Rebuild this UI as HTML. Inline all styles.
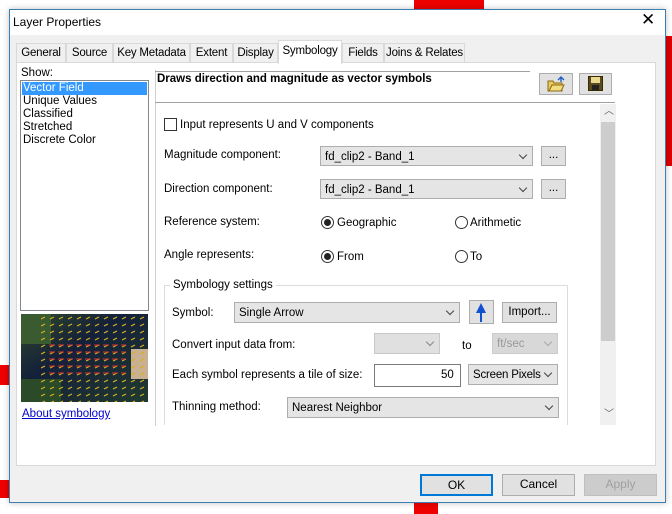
<!DOCTYPE html>
<html><head><meta charset="utf-8"><style>
*{margin:0;padding:0;box-sizing:border-box}
body{width:672px;height:514px;overflow:hidden;background:#fff;font-family:"Liberation Sans",sans-serif;font-size:11.5px;color:#000;position:relative}
.a{position:absolute}
.t{position:absolute;line-height:14px;white-space:nowrap}
.cb{position:absolute;background:#e5e5e5;border:1px solid #adadad}
.cb span{position:absolute;left:4px;top:3px;line-height:14px;white-space:nowrap}
.chev{position:absolute;right:6px;top:5px;width:6px;height:6px;border-right:1px solid #444;border-bottom:1px solid #444;transform:rotate(45deg);}
.btn{position:absolute;background:#e1e1e1;border:1px solid #adadad;text-align:center;line-height:19px;white-space:nowrap}
.tab{position:absolute;top:43px;height:20px;border:1px solid #d9d9d9;border-bottom:none;background:#f0f0f0;text-align:center;line-height:19px;font-size:11.5px;white-space:nowrap;letter-spacing:-0.2px}
.radio{position:absolute;width:13px;height:13px;border:1px solid #333;border-radius:50%;background:#fff}
.radio.on::after{content:"";position:absolute;left:2px;top:2px;width:7px;height:7px;border-radius:50%;background:#222}
</style></head><body>
<div class="a" style="left:414px;top:0;width:70px;height:10px;background:#e00"></div>
<div class="a" style="left:665px;top:36px;width:7px;height:130px;background:#d00"></div>
<div class="a" style="left:0;top:365px;width:9px;height:20px;background:#e00"></div>
<div class="a" style="left:0;top:480px;width:9px;height:18px;background:#e00"></div>
<div class="a" style="left:414px;top:502px;width:24px;height:12px;background:#e00"></div>
<!-- dialog -->
<div class="a" style="left:9px;top:9px;width:657px;height:494px;background:#f0f0f0;border:1px solid #3c7fb1;box-shadow:0 0 6px rgba(0,0,0,.25)"></div>
<div class="a" style="left:10px;top:10px;width:655px;height:25px;background:#fff"></div>
<div class="t" style="left:13px;top:15px;font-size:12px">Layer Properties</div>
<div class="t" style="left:641px;top:13px;font-size:17px;font-weight:300">✕</div>
<!-- tabs -->
<div class="tab" style="left:16px;width:50px">General</div>
<div class="tab" style="left:66px;width:47px">Source</div>
<div class="tab" style="left:113px;width:77px">Key Metadata</div>
<div class="tab" style="left:190px;width:43px">Extent</div>
<div class="tab" style="left:233px;width:45px">Display</div>
<div class="tab" style="left:342px;width:42px">Fields</div>
<div class="tab" style="left:384px;width:81px">Joins &amp; Relates</div>
<div class="a" style="left:16px;top:62px;width:640px;height:404px;background:#fff;border:1px solid #d9d9d9"></div>
<div class="tab" style="left:278px;top:40px;width:64px;height:24px;background:#fff;line-height:21px">Symbology</div>
<!-- left -->
<div class="t" style="left:21px;top:66px">Show:</div>
<div class="a" style="left:20px;top:80px;width:129px;height:231px;border:1px solid #828790"></div>
<div class="a" style="left:22px;top:82px;width:125px;height:13px;background:#3399ff"></div>
<div class="t" style="left:23px;top:82px;line-height:13px;color:#fff">Vector Field</div>
<div class="t" style="left:23px;top:95px;line-height:13px">Unique Values</div>
<div class="t" style="left:23px;top:108px;line-height:13px">Classified</div>
<div class="t" style="left:23px;top:121px;line-height:13px">Stretched</div>
<div class="t" style="left:23px;top:134px;line-height:13px">Discrete Color</div>
<svg class="a" style="left:21px;top:314px" width="127" height="88">
<defs><linearGradient id="g" x1="0" y1="0" x2="1" y2="1"><stop offset="0" stop-color="#2f4a2a"/><stop offset=".4" stop-color="#14203a"/><stop offset="1" stop-color="#203a30"/></linearGradient>
<pattern id="p" width="9" height="7" patternUnits="userSpaceOnUse"><line x1="2" y1="5" x2="6" y2="3" stroke="#d8b020" stroke-width="1.2"/></pattern>
<pattern id="q" width="9" height="7" patternUnits="userSpaceOnUse"><line x1="1" y1="3" x2="7" y2="3" stroke="#d03030" stroke-width="1.3"/></pattern></defs>
<rect width="127" height="88" fill="url(#g)"/>
<rect x="0" y="0" width="30" height="30" fill="#3a5a30"/>
<rect x="110" y="35" width="17" height="30" fill="#c8b090"/>
<rect x="0" y="65" width="40" height="23" fill="#2a4a28"/>
<rect x="20" y="0" width="107" height="88" fill="url(#p)"/>
<rect x="25" y="25" width="80" height="40" fill="url(#q)" opacity=".8"/>
</svg>
<div class="t" style="left:22px;top:407px;color:#0000cc;text-decoration:underline">About symbology</div>
<div class="a" style="left:155px;top:70px;width:1px;height:356px;background:#d0d0d0"></div>
<!-- right header -->
<div class="a" style="left:155px;top:71px;width:375px;height:1px;background:#a0a0a0"></div>
<div class="t" style="left:157px;top:72px;font-weight:bold">Draws direction and magnitude as vector symbols</div>
<div class="a" style="left:155px;top:102px;width:460px;height:1px;background:#a0a0a0"></div>
<div class="btn" style="left:539px;top:73px;width:34px;height:22px"></div>
<svg class="a" style="left:547px;top:76px" width="18" height="16"><path d="M1 5h5l1 2h8v8H1z" fill="#e8c860" stroke="#8a6a10"/><path d="M2 15l3-6h12l-3 6z" fill="#f4dc80" stroke="#8a6a10"/><path d="M11 4l3-3 3 3M14 1v5" stroke="#2060c0" fill="none" stroke-width="1.4"/></svg>
<div class="btn" style="left:579px;top:73px;width:33px;height:22px"></div>
<svg class="a" style="left:588px;top:76px" width="15" height="15"><rect x=".5" y=".5" width="14" height="14" fill="#5a4a20" stroke="#3a2a00"/><rect x="3" y="1" width="9" height="6" fill="#e8d890"/><rect x="4" y="9" width="7" height="5" fill="#222"/></svg>
<!-- scrollbar -->
<div class="a" style="left:600px;top:104px;width:16px;height:321px;background:#f0f0f0"></div>
<div class="a" style="left:601px;top:122px;width:14px;height:219px;background:#cdcdcd"></div>
<div class="t" style="left:604px;top:105px;font-size:10px;color:#606060">︿</div>
<div class="t" style="left:604px;top:408px;font-size:10px;color:#606060">﹀</div>
<!-- content -->
<div class="a" style="left:164px;top:118px;width:13px;height:13px;border:1px solid #333;background:#fff"></div>
<div class="t" style="left:180px;top:118px">Input represents U and V components</div>
<div class="t" style="left:164px;top:148px">Magnitude component:</div>
<div class="cb" style="left:320px;top:146px;width:213px;height:20px"><span>fd_clip2 - Band_1</span><i class="chev"></i></div>
<div class="btn" style="left:541px;top:146px;width:25px;height:20px;line-height:16px">...</div>
<div class="t" style="left:164px;top:182px">Direction component:</div>
<div class="cb" style="left:320px;top:179px;width:213px;height:20px"><span>fd_clip2 - Band_1</span><i class="chev"></i></div>
<div class="btn" style="left:541px;top:179px;width:25px;height:20px;line-height:16px">...</div>
<div class="t" style="left:164px;top:215px">Reference system:</div>
<div class="radio on" style="left:321px;top:216px"></div><div class="t" style="left:337px;top:216px">Geographic</div>
<div class="radio" style="left:455px;top:216px"></div><div class="t" style="left:470px;top:216px">Arithmetic</div>
<div class="t" style="left:164px;top:248px">Angle represents:</div>
<div class="radio on" style="left:321px;top:250px"></div><div class="t" style="left:337px;top:250px">From</div>
<div class="radio" style="left:455px;top:250px"></div><div class="t" style="left:470px;top:250px">To</div>
<!-- group -->
<div class="a" style="left:164px;top:285px;width:404px;height:145px;border:1px solid #dcdcdc;border-bottom:none"></div>
<div class="t" style="left:170px;top:278px;background:#fff;padding:0 3px">Symbology settings</div>
<div class="t" style="left:172px;top:306px">Symbol:</div>
<div class="cb" style="left:234px;top:302px;width:226px;height:21px"><span>Single Arrow</span><i class="chev"></i></div>
<div class="btn" style="left:469px;top:300px;width:25px;height:24px"></div>
<svg class="a" style="left:475px;top:302px" width="12" height="21"><path d="M6 1L1 11h4v9h2v-9h4z" fill="#1050d0"/></svg>
<div class="btn" style="left:502px;top:302px;width:55px;height:21px">Import...</div>
<div class="t" style="left:172px;top:338px">Convert input data from:</div>
<div class="cb" style="left:374px;top:333px;width:66px;height:21px;background:#e0e0e0;border-color:#c8c8c8"><i class="chev" style="border-color:#888"></i></div>
<div class="t" style="left:462px;top:339px">to</div>
<div class="cb" style="left:492px;top:333px;width:66px;height:21px;background:#d8d8d8;border-color:#ccc"><span style="color:#999">ft/sec</span><i class="chev" style="border-color:#aaa"></i></div>
<div class="t" style="left:172px;top:368px">Each symbol represents a tile of size:</div>
<div class="a" style="left:374px;top:364px;width:87px;height:23px;border:1px solid #7a7a7a;background:#fff"></div>
<div class="t" style="left:441px;top:368px">50</div>
<div class="cb" style="left:468px;top:364px;width:90px;height:21px"><span style="letter-spacing:-0.2px">Screen Pixels</span><i class="chev"></i></div>
<div class="t" style="left:172px;top:400px">Thinning method:</div>
<div class="cb" style="left:287px;top:397px;width:272px;height:21px"><span>Nearest Neighbor</span><i class="chev"></i></div>
<div class="a" style="left:156px;top:425px;width:460px;height:40px;background:#fff"></div>
<!-- buttons -->
<div class="btn" style="left:420px;top:474px;width:73px;height:22px;border:2px solid #0078d7;line-height:18px;font-size:12px">OK</div>
<div class="btn" style="left:502px;top:474px;width:73px;height:22px;font-size:12px">Cancel</div>
<div class="btn" style="left:584px;top:474px;width:73px;height:22px;font-size:12px;color:#a0a0a0;background:#cccccc;border-color:#bfbfbf">Apply</div>
</body></html>
